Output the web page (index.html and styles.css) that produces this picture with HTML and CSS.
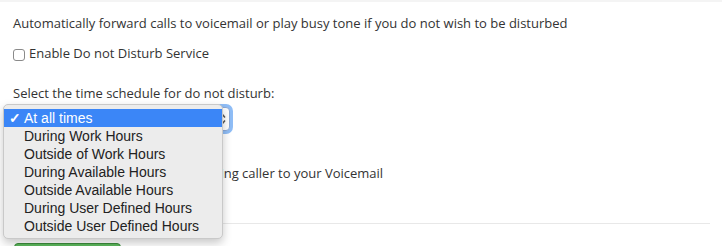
FILE: index.html
```html
<!DOCTYPE html>
<html>
<head>
<meta charset="utf-8">
<link rel="stylesheet" href="styles.css">
</head>
<body>
<div class="page">
  <div class="content">
    <p class="intro">Automatically forward calls to voicemail or play busy tone if you do not wish to be disturbed</p>
    <label class="check-row"><span class="checkbox"></span><span>Enable Do not Disturb Service</span></label>
    <p class="schedule-label">Select the time schedule for do not disturb:</p>
    <div class="select-wrap">
      <div class="select">
        <span class="select-value">At all times</span>
        <svg class="select-arrows" width="8" height="14" viewBox="0 0 8 14"><path d="M1 5.5 L4 2 L7 5.5" fill="none" stroke="#555" stroke-width="1.5"/><path d="M1 8.5 L4 12 L7 8.5" fill="none" stroke="#555" stroke-width="1.5"/></svg>
      </div>
      <ul class="menu">
        <li class="menu-item active"><span class="tick">✓</span>At all times</li>
        <li class="menu-item">During Work Hours</li>
        <li class="menu-item">Outside of Work Hours</li>
        <li class="menu-item">During Available Hours</li>
        <li class="menu-item">Outside Available Hours</li>
        <li class="menu-item">During User Defined Hours</li>
        <li class="menu-item">Outside User Defined Hours</li>
      </ul>
    </div>
    <p class="action-label">When enabled:</p>
    <label class="radio-row"><span class="radio"></span><span>Forward the incoming caller to your Voicemail</span></label>
    <label class="radio-row"><span class="radio"></span><span>Play busy tone</span></label>
  </div>
  <hr class="divider">
  <div class="actions"><button class="save">Save</button></div>
</div>
</body>
</html>
```
FILE: styles.css
```css
html, body {
  margin: 0;
  padding: 0;
  background: #fff;
}
body {
  font-family: "Open Sans", "Liberation Sans", sans-serif;
  font-size: 13px;
  line-height: 20px;
  color: #333;
  overflow: hidden;
}
.page {
  border-top: 2px solid #f4f4f4;
  width: 722px;
  height: 244px;
  overflow: hidden;
}
.content {
  padding-left: 13px;
}
.intro {
  margin: 11px 0 0;
}
.check-row {
  display: flex;
  align-items: center;
  margin-top: 10px;
  height: 20px;
}
.checkbox {
  display: inline-block;
  width: 10px;
  height: 10px;
  border: 1px solid #8a8a8a;
  border-radius: 3px;
  margin: 3px 4px 0 0;
  background: #fff;
}
.schedule-label {
  margin: 20px 0 0;
}
.select-wrap {
  position: relative;
  height: 40px;
}
.select {
  position: absolute;
  left: 3px;
  top: 4px;
  width: 200px;
  height: 22px;
  border: 1px solid #8aa9d8;
  border-radius: 4px;
  box-shadow: 0 0 0 3px #8fbdf6;
  background: #fff;
  display: flex;
  align-items: center;
  justify-content: space-between;
  padding: 0 6px;
  box-sizing: content-box;
  font-family: "Liberation Sans", sans-serif;
  font-size: 14px;
}
.select-arrows {
  margin-right: -3px;
}
.menu {
  position: absolute;
  left: -10px;
  top: 1px;
  width: 218px;
  margin: 0;
  padding: 4px 0 3px;
  list-style: none;
  background: #ececec;
  border: 1px solid #c9c9c9;
  border-radius: 5px;
  box-shadow: 0 4px 10px rgba(0, 0, 0, 0.22);
  font-family: "Liberation Sans", sans-serif;
  font-size: 14px;
  line-height: 18px;
  color: #222;
  z-index: 2;
}
.menu-item {
  position: relative;
  height: 18px;
  padding-left: 20px;
}
.menu-item.active {
  background: #3b86f7;
  color: #fff;
}
.tick {
  position: absolute;
  left: 5px;
  top: 0;
  font-weight: bold;
  font-size: 14px;
}
.action-label {
  margin: 0;
}
.radio-row {
  display: flex;
  align-items: center;
  margin: 0 0 0 76px;
  height: 20px;
}
.radio {
  display: inline-block;
  width: 11px;
  height: 11px;
  border: 1px solid #8a8a8a;
  border-radius: 50%;
  margin-right: 4px;
}
.divider {
  border: 0;
  border-top: 1px solid #e8e8e8;
  margin: 20px 12px 0 13px;
}
.actions {
  padding: 19px 0 0 14px;
}
.save {
  width: 107px;
  height: 32px;
  border: 1px solid #3d8b3d;
  border-radius: 4px;
  background: #5cb85c;
  color: #fff;
  font-family: "Open Sans", sans-serif;
  font-size: 14px;
}
```
